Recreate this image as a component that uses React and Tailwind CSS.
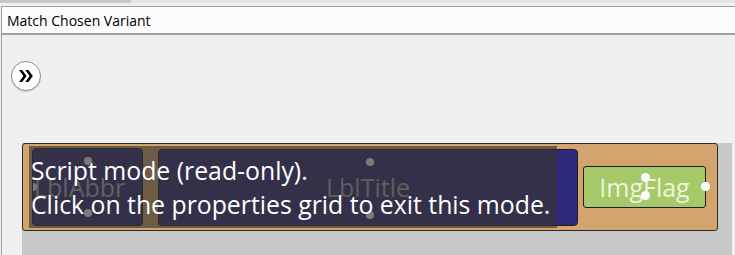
import React from 'react';

const Dot = ({ className }) => (
  <span className={`absolute rounded-full bg-white ${className}`} />
);

const App = () => {
  return (
    <div className="w-[735px] h-[255px] bg-[#f0f0f0] flex flex-col overflow-hidden font-['Open_Sans',sans-serif]">
      {/* top strip */}
      <div className="h-[3px] flex">
        <div className="w-[131px] bg-[#c8c8c8]" />
        <div className="flex-1 bg-[#e6e6e6]" />
      </div>
      <div className="h-[3px]" />

      {/* name field */}
      <div className="h-[29px] ml-[1px] border-t border-b-2 border-l border-[#a0a0a0] bg-[#fcfcfc] pl-[5px] flex items-center text-[14px] text-black">
        Match Chosen Variant
      </div>

      {/* lower area */}
      <div className="flex-1 ml-[1px] border-l border-[#a0a0a0] flex flex-col pt-[26px]">
        <button className="ml-[9px] w-[30px] h-[30px] rounded-full bg-white border-[1.5px] border-[#8e8e8e] flex items-center justify-center shadow-[0_1px_1px_rgba(0,0,0,0.15)]">
          <svg width="16" height="14" viewBox="0 0 16 14">
            <path d="M1 1 L4.2 1 L8.6 7 L4.2 13 L1 13 L5.4 7 Z" fill="#000" />
            <path d="M7.2 1 L10.4 1 L14.8 7 L10.4 13 L7.2 13 L11.6 7 Z" fill="#000" />
          </svg>
        </button>

        {/* canvas */}
        <div className="mt-[52px] ml-[20px] mr-[3px] flex-1 bg-[#c8c8c8]">
          <div className="relative w-[696px] h-[88px] border border-[#2a2a2a] rounded-[3px] bg-[#d3a46e] flex items-center pl-[9px]">
            <div className="relative w-[111px] h-[78px] mr-[15px] border border-[#1e1e1e] rounded-[4px] bg-[#2f2a7c] flex items-center justify-start pl-[1px] overflow-hidden">
              <span className="text-[25px] text-[#b4b4b4] leading-none">LblAbbr</span>
              <Dot className="w-[8px] h-[8px] left-[51px] top-[8px]" />
              <Dot className="w-[8px] h-[8px] left-[51px] top-[60px]" />
              <Dot className="w-[8px] h-[8px] -left-[4px] top-[34px]" />
            </div>
            <div className="relative w-[420px] h-[77px] mr-[5px] border border-[#1e1e1e] rounded-[4px] bg-[#2f2a7c] flex items-center justify-center">
              <span className="text-[25px] text-[#a8a8a8] leading-none">LblTitle</span>
              <Dot className="w-[8px] h-[8px] left-[207px] top-[8px]" />
              <Dot className="w-[8px] h-[8px] left-[207px] top-[61px]" />
            </div>
            <div className="relative w-[123px] h-[42px] border border-[#1e1e1e] rounded-[3px] bg-[#a6ca6a] flex items-center justify-center">
              <span className="text-[25px] text-[#eef3dc] leading-none">ImgFlag</span>
              <Dot className="w-[9px] h-[9px] left-[57px] top-[6px]" />
              <Dot className="w-[9px] h-[9px] left-[57px] top-[24px]" />
              <Dot className="w-[9px] h-[9px] -right-[5px] top-[15px]" />
            </div>

            {/* script mode overlay */}
            <div className="absolute left-[6px] top-[2px] w-[528px] h-[82px] bg-[rgba(56,52,48,0.65)] flex flex-col justify-center pl-[2px] text-white text-[24.8px] leading-[34px] whitespace-nowrap">
              <span>Script mode (read-only).</span>
              <span>Click on the properties grid to exit this mode.</span>
            </div>
          </div>
        </div>
      </div>
    </div>
  );
};

export default App;
